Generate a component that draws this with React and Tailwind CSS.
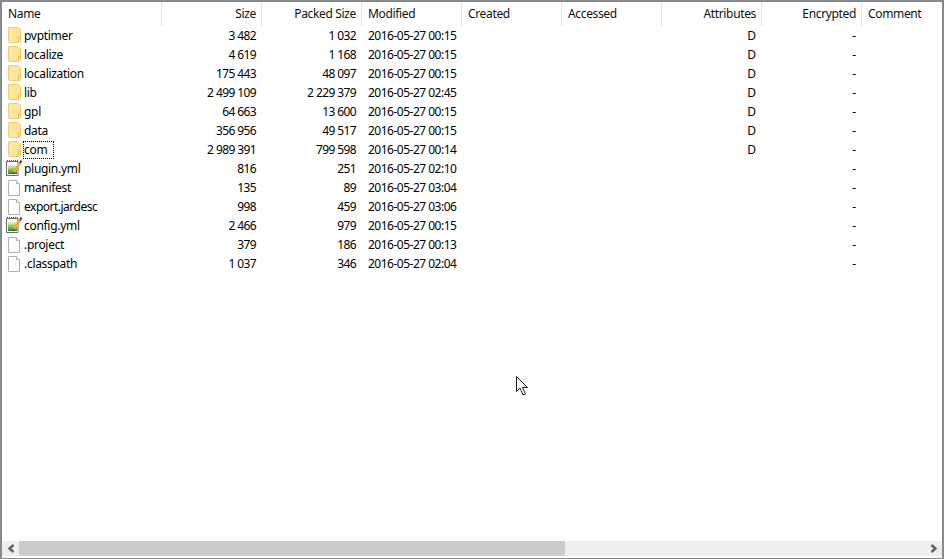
const COLS = [
  { k: "Name", w: 160, left: true },
  { k: "Size", w: 100 },
  { k: "Packed Size", w: 100 },
  { k: "Modified", w: 100, left: true },
  { k: "Created", w: 100, left: true },
  { k: "Accessed", w: 100, left: true },
  { k: "Attributes", w: 100 },
  { k: "Encrypted", w: 100 },
  { k: "Comment", w: 80, left: true },
];

const ROWS = [
  ["folder", "pvptimer", "3 482", "1 032", "2016-05-27 00:15", "D"],
  ["folder", "localize", "4 619", "1 168", "2016-05-27 00:15", "D"],
  ["folder", "localization", "175 443", "48 097", "2016-05-27 00:15", "D"],
  ["folder", "lib", "2 499 109", "2 229 379", "2016-05-27 02:45", "D"],
  ["folder", "gpl", "64 663", "13 600", "2016-05-27 00:15", "D"],
  ["folder", "data", "356 956", "49 517", "2016-05-27 00:15", "D"],
  ["folder", "com", "2 989 391", "799 598", "2016-05-27 00:14", "D"],
  ["yml", "plugin.yml", "816", "251", "2016-05-27 02:10", ""],
  ["file", "manifest", "135", "89", "2016-05-27 03:04", ""],
  ["file", "export.jardesc", "998", "459", "2016-05-27 03:06", ""],
  ["yml", "config.yml", "2 466", "979", "2016-05-27 00:15", ""],
  ["file", ".project", "379", "186", "2016-05-27 00:13", ""],
  ["file", ".classpath", "1 037", "346", "2016-05-27 02:04", ""],
];

function Icon({ t, id }) {
  return (
    <svg width="20" height="19" viewBox="0 0 20 19" className="shrink-0 block">
      {t === "folder" && (
        <>
          <path d="M5 1.500h8.500l3 2v12a1 1 0 0 1-1 1h-10.500a1 1 0 0 1-0.500-1v-13.500a0.500 0.500 0 0 1 0.500-0.500z" fill="#fde59e" stroke="#f0cb72" />
          <path d="M14.500 16v-4.500h2" fill="none" stroke="#eec14f" />
        </>
      )}
      {t === "file" && (
        <>
          <path d="M4.500 2.500h8l3 3v12h-11z" fill="#fff" stroke="#b0b0b0" />
          <path d="M12.500 2.500v3h3" fill="#f4f4f4" stroke="#b0b0b0" />
        </>
      )}
      {t === "yml" && (
        <>
          <defs>
            <linearGradient id={id} x1="0" y1="0" x2="0" y2="1">
              <stop offset="0" stopColor="#eaf2c8" />
              <stop offset="0.45" stopColor="#9cc95a" />
              <stop offset="1" stopColor="#23803a" />
            </linearGradient>
          </defs>
          <path d="M2.500 2.500h11.500v14h-11.500z" fill="#fff" stroke="#6c6c6c" />
          <path d="M3 1.500h11" stroke="#555" strokeDasharray="1 1" />
          <rect x="4" y="6" width="9" height="9" fill={`url(#${id})`} />
          <path d="M10 13L16.500 3.500" stroke="#f0ad2b" strokeWidth="2.600" />
          <path d="M16 4L17.500 1.500" stroke="#7d2a1a" strokeWidth="2" />
          <path d="M9 15.500l0.500-2.500 1.800 1.200z" fill="#444" />
        </>
      )}
    </svg>
  );
}

export default function App() {
  return (
    <div className="w-[944px] h-[559px] overflow-hidden bg-white flex flex-col border-t-2 border-l-2 border-r-2 border-b border-[#838b91] text-[12px] text-black font-['Noto_Sans','Open_Sans',sans-serif] relative">
      <div className="flex h-[24px] shrink-0">
        {COLS.map((c, i) => (
          <div
            key={c.k}
            style={{ width: c.w }}
            className={`h-[24px] shrink-0 flex items-center pl-[6px] pr-[5px] leading-none tracking-[-0.35px] text-[#111111] whitespace-nowrap border-r border-[#e5e5e5] ${c.left ? "justify-start" : "justify-end"} ${i === COLS.length - 1 ? "border-r-0" : ""}`}
          >
            {c.k}
          </div>
        ))}
      </div>
      <div className="flex-1 flex flex-col">
        {ROWS.map((r) => (
          <div key={r[1]} className="flex h-[19px] items-center whitespace-nowrap">
            <div className="w-[160px] shrink-0 flex items-center">
              <div className="w-[22px] shrink-0 pl-[2px]">
                <Icon t={r[0]} id={`g-${r[1].replace(".", "")}`} />
              </div>
              {r[1] === "com" ? (
                <span className="ml-[-1px] w-[31px] h-[18px] box-border border border-dotted border-black flex items-center tracking-[-0.3px]">{r[1]}</span>
              ) : (
                <span className={r[1] === "export.jardesc" ? "tracking-[-0.5px]" : "tracking-[-0.3px]"}>{r[1]}</span>
              )}
            </div>
            <div className="w-[100px] shrink-0 text-right pr-[6px] tracking-[-0.6px]">{r[2]}</div>
            <div className="w-[100px] shrink-0 text-right pr-[6px] tracking-[-0.6px]">{r[3]}</div>
            <div className="w-[100px] shrink-0 pl-[6px] tracking-[-0.5px]">{r[4]}</div>
            <div className="w-[200px] shrink-0" />
            <div className="w-[100px] shrink-0 text-right pr-[6px]">{r[5]}</div>
            <div className="w-[100px] shrink-0 text-right pr-[6px]">-</div>
          </div>
        ))}
      </div>
      <div className="h-[15px] shrink-0 bg-[#eeeeee] flex items-stretch mb-[2px]">
        <div className="w-[17px] flex items-center justify-center">
          <svg width="8" height="9" viewBox="0 0 8 9"><path d="M6.500 1L2.500 4.500l4 3.500" fill="none" stroke="#606060" strokeWidth="2.400" /></svg>
        </div>
        <div className="w-[546px] bg-[#cbcbcb]" />
        <div className="flex-1" />
        <div className="w-[17px] flex items-center justify-center">
          <svg width="8" height="9" viewBox="0 0 8 9"><path d="M1.500 1l4 3.500-4 3.500" fill="none" stroke="#606060" strokeWidth="2.400" /></svg>
        </div>
      </div>
      <svg width="14" height="21" viewBox="0 0 14 21" className="absolute left-[514px] top-[374px]">
        <path d="M0.500 0.500v15l3.500-3.500 3 7 2.500-1-3-6.500h5z" fill="#fff" stroke="#222" />
      </svg>
    </div>
  );
}
